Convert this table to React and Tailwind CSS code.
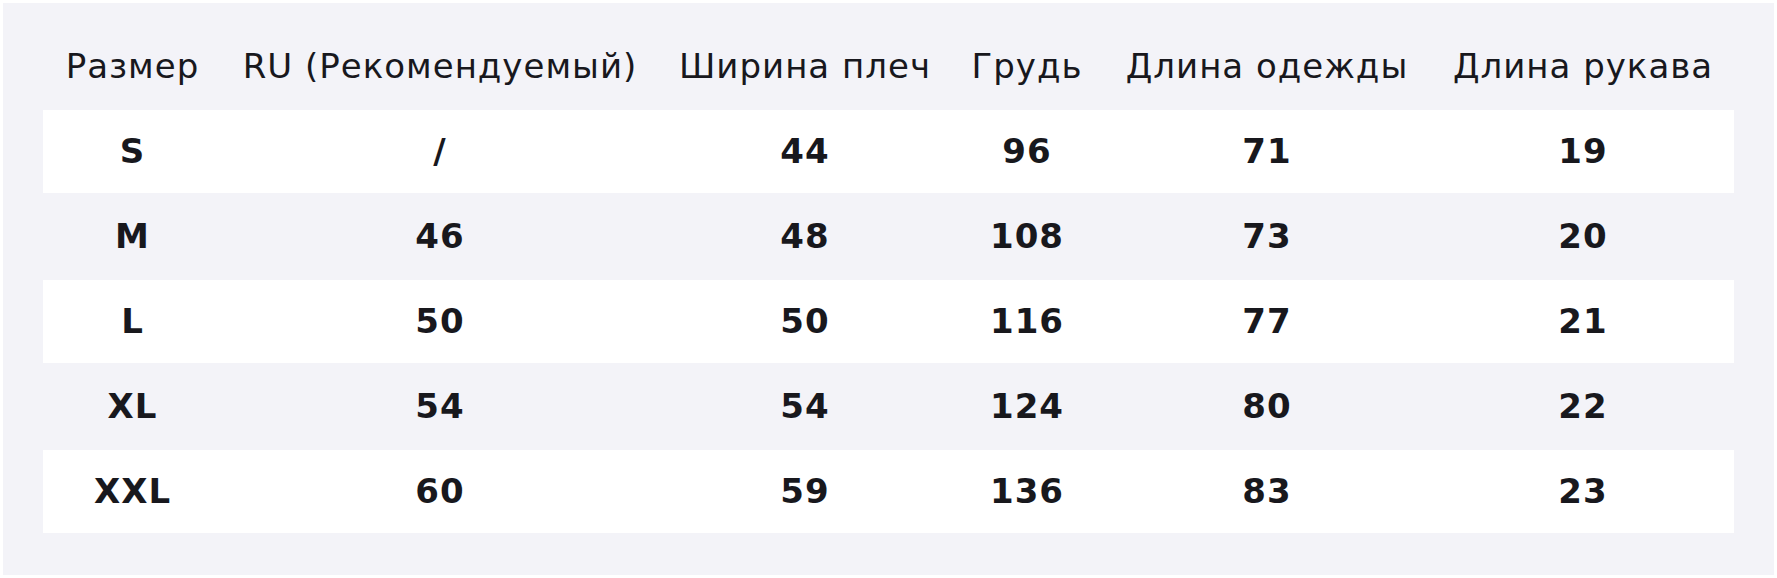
export default function App() {
  const headers = ["Размер", "RU (Рекомендуемый)", "Ширина плеч", "Грудь", "Длина одежды", "Длина рукава"];
  const rows = [
    ["S", "/", "44", "96", "71", "19"],
    ["M", "46", "48", "108", "73", "20"],
    ["L", "50", "50", "116", "77", "21"],
    ["XL", "54", "54", "124", "80", "22"],
    ["XXL", "60", "59", "136", "83", "23"],
  ];
  const grid = "grid grid-cols-[179px_436px_294px_150px_330px_302px] h-[83px] items-center";
  return (
    <div className="w-[1777px] h-[578px] bg-white p-[3px]" style={{ fontFamily: '"DejaVu Sans", sans-serif' }}>
      <div className="h-full bg-[#f3f3f8] pt-[22px] px-[40px] pb-[42px] flex flex-col gap-[2px] text-[#18181d]">
        <div className={grid}>
          {headers.map((h) => (
            <div key={h} className="text-center text-[34px] tracking-[1px] whitespace-nowrap">{h}</div>
          ))}
        </div>
        {rows.map((r, i) => (
          <div key={i} className={`${grid} ${i % 2 === 0 ? "bg-white" : ""}`}>
            {r.map((c, j) => (
              <div key={j} className="text-center text-[34px] tracking-[1px] font-bold">{c}</div>
            ))}
          </div>
        ))}
      </div>
    </div>
  );
}
